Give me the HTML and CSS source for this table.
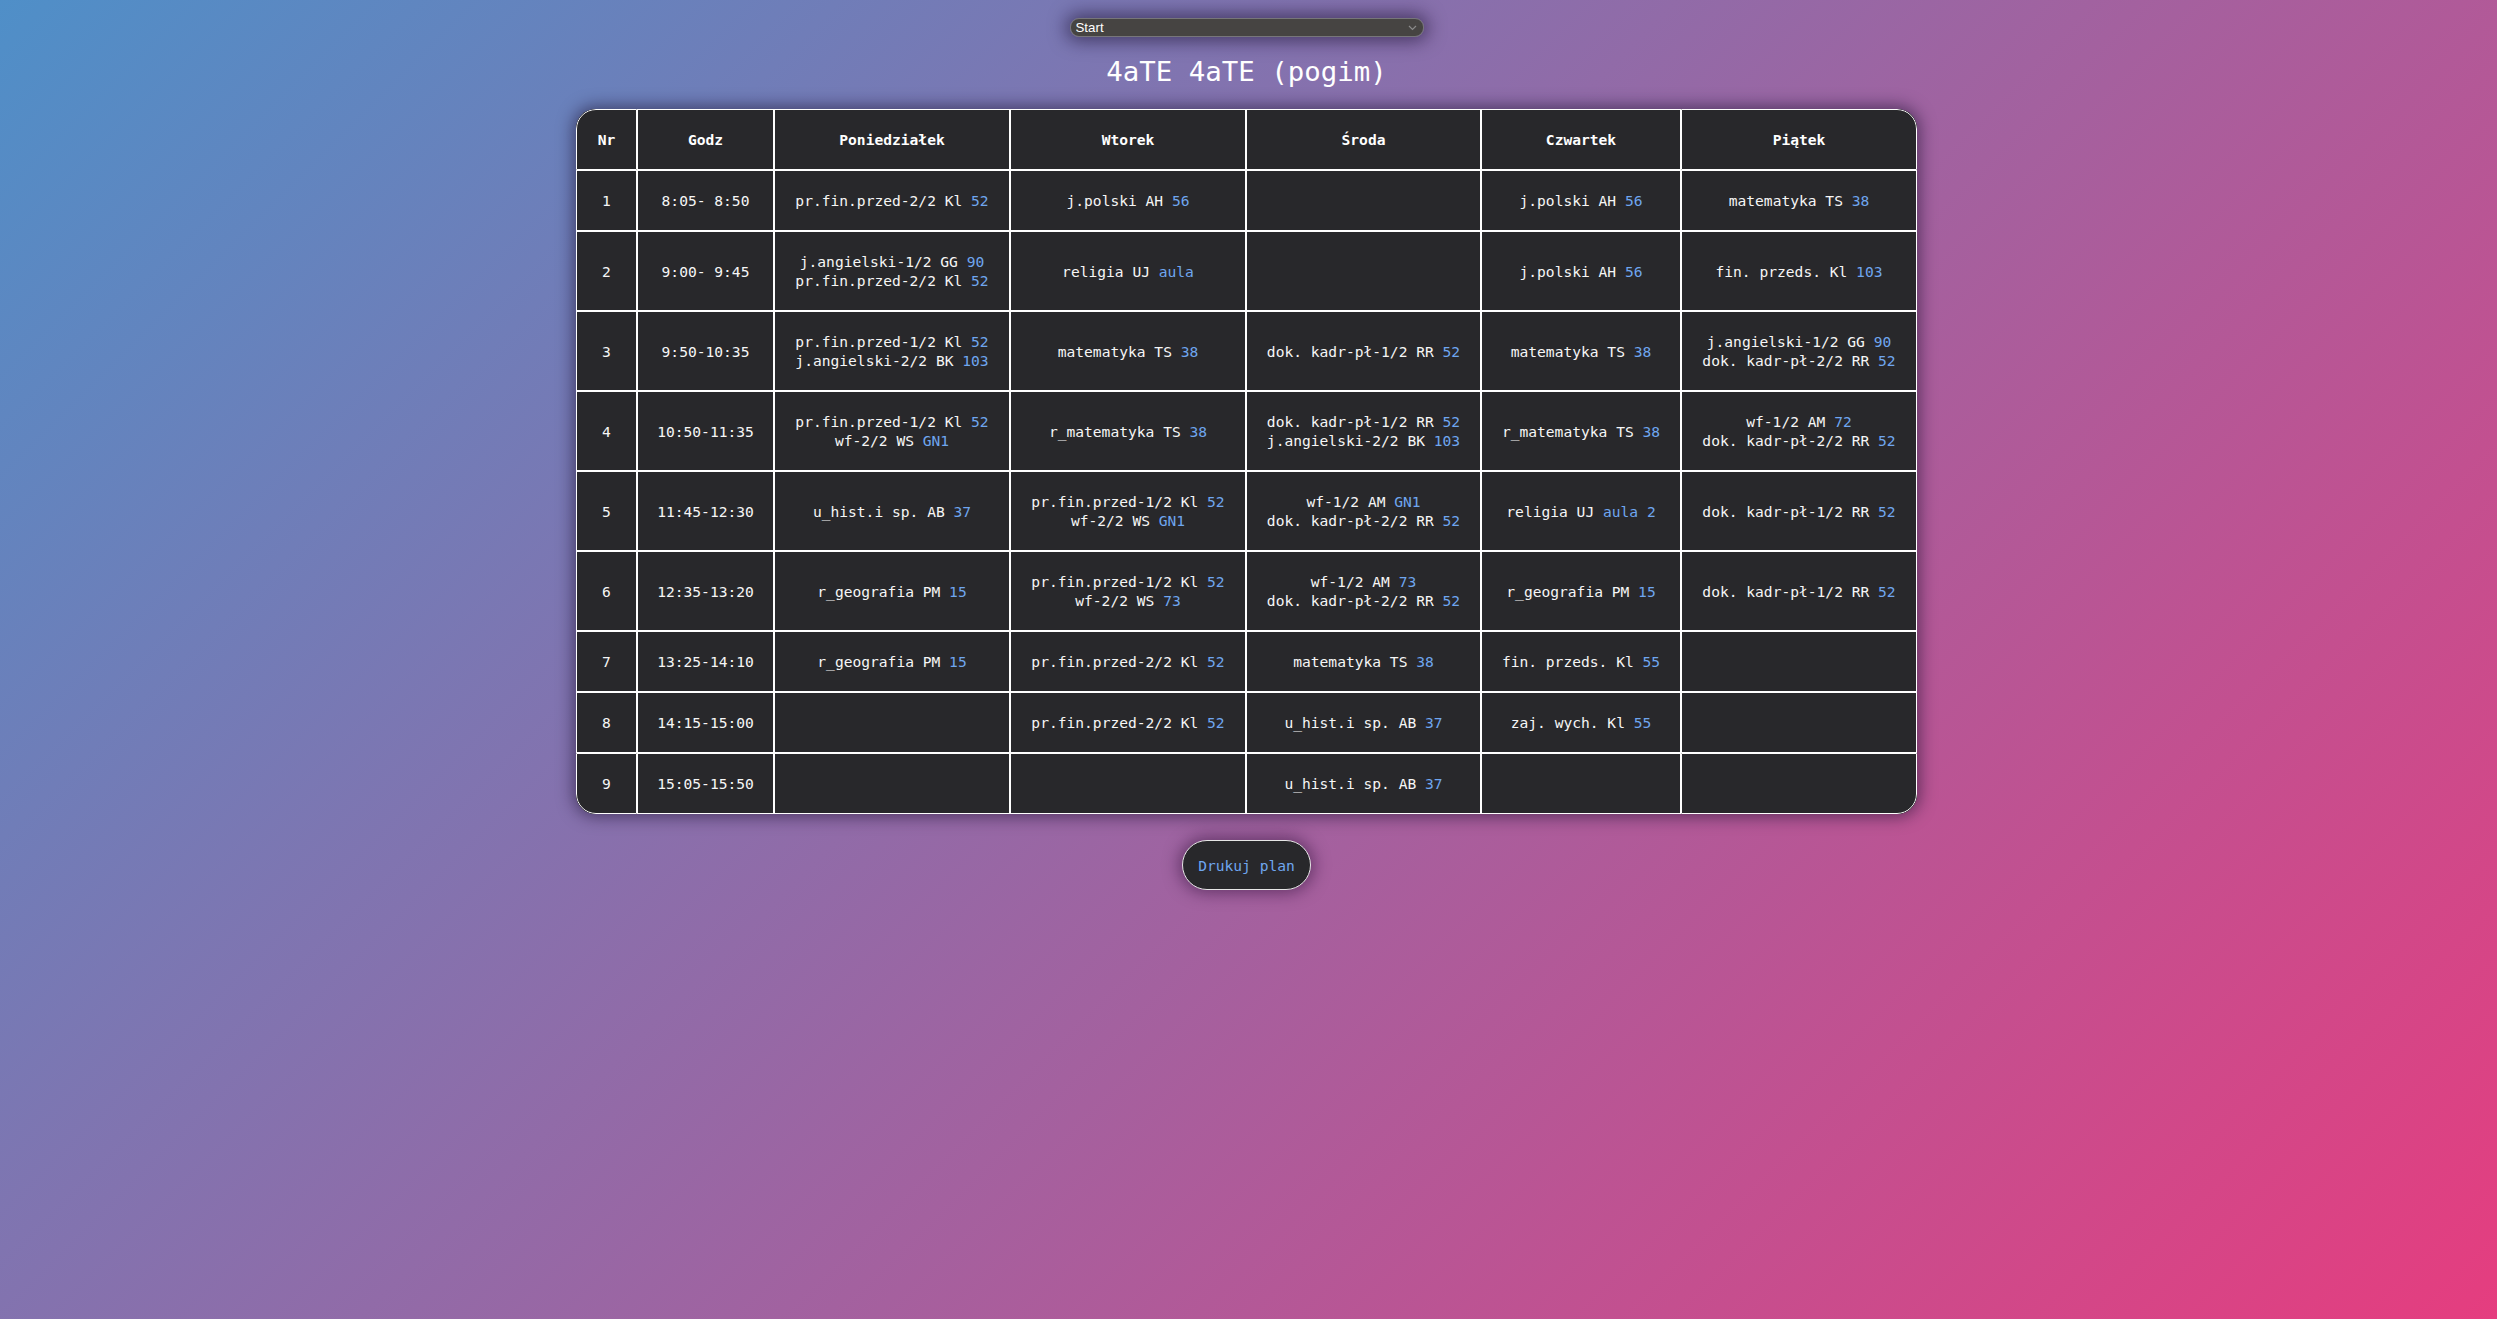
FILE: index.html
```html
<!DOCTYPE html>
<html lang="pl">
<head>
<meta charset="utf-8">
<title>4aTE 4aTE (pogim)</title>
<link rel="stylesheet" href="styles.css">
</head>
<body>
<main class="page">
  <div class="select-wrap">
    <select class="picker"><option>Start</option></select>
    <svg class="chev" width="9" height="6" viewBox="0 0 9 6"><path d="M1 1 L4.5 4.5 L8 1" fill="none" stroke="#8a8a8a" stroke-width="1.2"/></svg>
  </div>
  <h1 class="title">4aTE 4aTE (pogim)</h1>
  <div class="plan-wrap">
  <table class="plan">
    <thead>
      <tr>
        <th class="c-nr">Nr</th>
        <th class="c-godz">Godz</th>
        <th class="c-day">Poniedziałek</th>
        <th class="c-day">Wtorek</th>
        <th class="c-sr">Środa</th>
        <th class="c-cz">Czwartek</th>
        <th class="c-day">Piątek</th>
      </tr>
    </thead>
    <tbody>
      <tr>
        <td>1</td><td>8:05- 8:50</td>
        <td>pr.fin.przed-2/2 Kl <span class="s">52</span></td>
        <td>j.polski AH <span class="s">56</span></td>
        <td></td>
        <td>j.polski AH <span class="s">56</span></td>
        <td>matematyka TS <span class="s">38</span></td>
      </tr>
      <tr>
        <td>2</td><td>9:00- 9:45</td>
        <td>j.angielski-1/2 GG <span class="s">90</span><br>pr.fin.przed-2/2 Kl <span class="s">52</span></td>
        <td>religia UJ <span class="s">aula</span></td>
        <td></td>
        <td>j.polski AH <span class="s">56</span></td>
        <td>fin. przeds. Kl <span class="s">103</span></td>
      </tr>
      <tr>
        <td>3</td><td>9:50-10:35</td>
        <td>pr.fin.przed-1/2 Kl <span class="s">52</span><br>j.angielski-2/2 BK <span class="s">103</span></td>
        <td>matematyka TS <span class="s">38</span></td>
        <td>dok. kadr-pł-1/2 RR <span class="s">52</span></td>
        <td>matematyka TS <span class="s">38</span></td>
        <td>j.angielski-1/2 GG <span class="s">90</span><br>dok. kadr-pł-2/2 RR <span class="s">52</span></td>
      </tr>
      <tr>
        <td>4</td><td>10:50-11:35</td>
        <td>pr.fin.przed-1/2 Kl <span class="s">52</span><br>wf-2/2 WS <span class="s">GN1</span></td>
        <td>r_matematyka TS <span class="s">38</span></td>
        <td>dok. kadr-pł-1/2 RR <span class="s">52</span><br>j.angielski-2/2 BK <span class="s">103</span></td>
        <td>r_matematyka TS <span class="s">38</span></td>
        <td>wf-1/2 AM <span class="s">72</span><br>dok. kadr-pł-2/2 RR <span class="s">52</span></td>
      </tr>
      <tr>
        <td>5</td><td>11:45-12:30</td>
        <td>u_hist.i sp. AB <span class="s">37</span></td>
        <td>pr.fin.przed-1/2 Kl <span class="s">52</span><br>wf-2/2 WS <span class="s">GN1</span></td>
        <td>wf-1/2 AM <span class="s">GN1</span><br>dok. kadr-pł-2/2 RR <span class="s">52</span></td>
        <td>religia UJ <span class="s">aula 2</span></td>
        <td>dok. kadr-pł-1/2 RR <span class="s">52</span></td>
      </tr>
      <tr>
        <td>6</td><td>12:35-13:20</td>
        <td>r_geografia PM <span class="s">15</span></td>
        <td>pr.fin.przed-1/2 Kl <span class="s">52</span><br>wf-2/2 WS <span class="s">73</span></td>
        <td>wf-1/2 AM <span class="s">73</span><br>dok. kadr-pł-2/2 RR <span class="s">52</span></td>
        <td>r_geografia PM <span class="s">15</span></td>
        <td>dok. kadr-pł-1/2 RR <span class="s">52</span></td>
      </tr>
      <tr>
        <td>7</td><td>13:25-14:10</td>
        <td>r_geografia PM <span class="s">15</span></td>
        <td>pr.fin.przed-2/2 Kl <span class="s">52</span></td>
        <td>matematyka TS <span class="s">38</span></td>
        <td>fin. przeds. Kl <span class="s">55</span></td>
        <td></td>
      </tr>
      <tr>
        <td>8</td><td>14:15-15:00</td>
        <td></td>
        <td>pr.fin.przed-2/2 Kl <span class="s">52</span></td>
        <td>u_hist.i sp. AB <span class="s">37</span></td>
        <td>zaj. wych. Kl <span class="s">55</span></td>
        <td></td>
      </tr>
      <tr>
        <td>9</td><td>15:05-15:50</td>
        <td></td>
        <td></td>
        <td>u_hist.i sp. AB <span class="s">37</span></td>
        <td></td>
        <td></td>
      </tr>
    </tbody>
  </table>
  </div>
  <button class="print">Drukuj plan</button>
</main>
</body>
</html>
```

FILE: styles.css
```css
html, body {
  margin: 0;
  padding: 0;
  min-height: 100%;
}

body {
  min-height: 1319px;
  background: linear-gradient(135deg, #4f8fc8 0%, #e53d7f 100%);
  font-family: "DejaVu Sans Mono", "Liberation Mono", monospace;
  color: #f4f4f4;
}

.page {
  display: flex;
  flex-direction: column;
  align-items: center;
  padding: 18px 4px 0 0;
}

.select-wrap {
  position: relative;
  width: 354px;
  height: 19px;
  border-radius: 9px;
  box-shadow: 0 0 18px 4px rgba(20, 10, 40, 0.55);
}

.picker {
  appearance: none;
  -webkit-appearance: none;
  width: 354px;
  height: 19px;
  margin: 0;
  padding: 0 0 0 5px;
  border: 1px solid #77767a;
  border-radius: 9px;
  background: #464442;
  color: #ffffff;
  font-family: "Liberation Sans", Arial, sans-serif;
  font-size: 13.3px;
  line-height: 17px;
  display: block;
}

.chev {
  position: absolute;
  right: 7px;
  top: 7px;
}

.title {
  margin: 19px 0 21px;
  font-family: "DejaVu Sans Mono", monospace;
  font-size: 27.4px;
  line-height: 32px;
  font-weight: normal;
  color: #ffffff;
}

.plan-wrap {
  width: 1341px;
  border-radius: 20px;
  overflow: hidden;
  background: #28282b;
  box-shadow: 0 0 16px 3px rgba(25, 15, 45, 0.55);
}

.plan {
  table-layout: fixed;
  width: 1341px;
  border-collapse: separate;
  border-spacing: 0;
  background: #28282b;
  font-size: 14.6px;
  line-height: 19px;
}

.plan th,
.plan td {
  box-sizing: border-box;
  border: 1px solid #ffffff;
  padding: 20px 4px;
  text-align: center;
  vertical-align: middle;
  white-space: pre;
  color: #f6f6f6;
  background: #28282b;
}

.plan thead th:first-child { border-top-left-radius: 20px; }
.plan thead th:last-child { border-top-right-radius: 20px; }
.plan tbody tr:last-child td:first-child { border-bottom-left-radius: 20px; }
.plan tbody tr:last-child td:last-child { border-bottom-right-radius: 20px; }

.plan th {
  font-weight: bold;
  color: #ffffff;
}

.c-nr { width: 61px; }
.c-godz { width: 137px; }
.c-day { width: 236px; }
.c-sr { width: 235px; }
.c-cz { width: 200px; }

.s {
  color: #6fa6ef;
}

.print {
  margin-top: 26px;
  width: 129px;
  height: 50px;
  padding: 0;
  border: 1px solid #e6e6e6;
  border-radius: 25px;
  background: #28282b;
  color: #6fa6ef;
  font-family: "DejaVu Sans Mono", monospace;
  font-size: 14.6px;
  line-height: 19px;
  box-shadow: 0 0 16px 3px rgba(40, 10, 50, 0.5);
  cursor: pointer;
}
```
